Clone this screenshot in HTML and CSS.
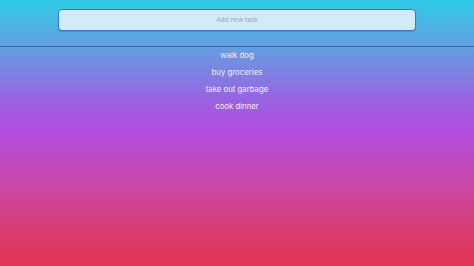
FILE: index.html
```html
<!DOCTYPE html>
<html>
<head>
<meta charset="utf-8">
<link rel="stylesheet" href="styles.css">
</head>
<body>
<div class="app">
  <header class="top">
    <input class="new-task" type="text" placeholder="Add new task">
  </header>
  <ul class="tasks">
    <li>walk dog</li>
    <li>buy groceries</li>
    <li>take out garbage</li>
    <li>cook dinner</li>
  </ul>
</div>
</body>
</html>
```
FILE: styles.css
```css
html, body {
  margin: 0;
  padding: 0;
  height: 100%;
}
body {
  font-family: "Inter", "Liberation Sans", sans-serif;
  background: linear-gradient(180deg, #2ecbe6 0%, #62a0e0 17%, #9a62e2 38%, #b24ce0 50%, #cc469e 72%, #e2354f 100%);
  min-height: 266px;
}
.app {
  display: flex;
  flex-direction: column;
}
.top {
  display: flex;
  justify-content: center;
  padding: 9px 58px 15px;
  border-bottom: 1px solid #3d6aa6;
}
.new-task {
  flex: 1;
  box-sizing: border-box;
  height: 22px;
  border: 1px solid #3a78bc;
  border-radius: 4px;
  background: #d3ebf8;
  text-align: center;
  font-family: inherit;
  font-size: 6.5px;
  color: #555;
  outline: none;
  box-shadow: 0 1px 1px rgba(0,0,0,0.15);
}
.new-task::placeholder {
  color: #9aa6ae;
}
.tasks {
  list-style: none;
  margin: 0;
  padding: 0;
  display: flex;
  flex-direction: column;
  align-items: center;
}
.tasks li {
  height: 17px;
  line-height: 17px;
  font-size: 7.8px;
  color: #f2eefa;
}
```
